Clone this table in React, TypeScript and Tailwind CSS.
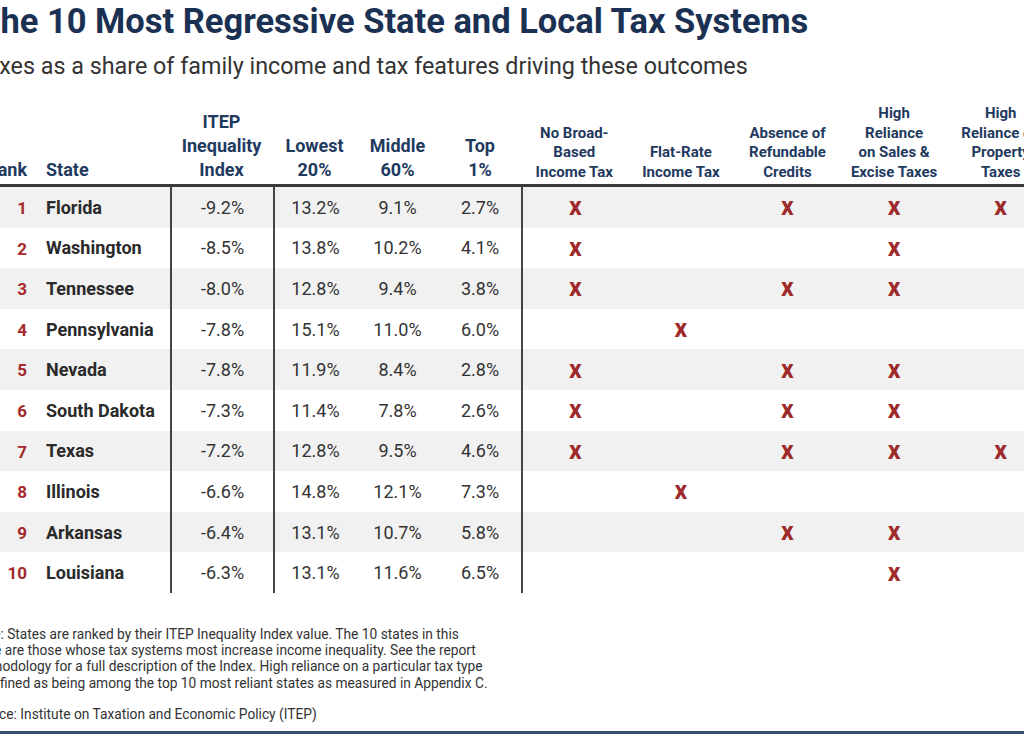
import React from "react";

type Row = [number, string, string, string, string, string, number[]];

const rows: Row[] = [
  [1, "Florida", "-9.2%", "13.2%", "9.1%", "2.7%", [1, 0, 1, 1, 1]],
  [2, "Washington", "-8.5%", "13.8%", "10.2%", "4.1%", [1, 0, 0, 1, 0]],
  [3, "Tennessee", "-8.0%", "12.8%", "9.4%", "3.8%", [1, 0, 1, 1, 0]],
  [4, "Pennsylvania", "-7.8%", "15.1%", "11.0%", "6.0%", [0, 1, 0, 0, 0]],
  [5, "Nevada", "-7.8%", "11.9%", "8.4%", "2.8%", [1, 0, 1, 1, 0]],
  [6, "South Dakota", "-7.3%", "11.4%", "7.8%", "2.6%", [1, 0, 1, 1, 0]],
  [7, "Texas", "-7.2%", "12.8%", "9.5%", "4.6%", [1, 0, 1, 1, 1]],
  [8, "Illinois", "-6.6%", "14.8%", "12.1%", "7.3%", [0, 1, 0, 0, 0]],
  [9, "Arkansas", "-6.4%", "13.1%", "10.7%", "5.8%", [0, 0, 1, 1, 0]],
  [10, "Louisiana", "-6.3%", "13.1%", "11.6%", "6.5%", [0, 0, 0, 1, 0]],
];

const grid =
  "grid grid-cols-[56px_134px_103px_83px_83px_82px_repeat(5,106.6px)]";

function FeatHead({ lines }: { lines: string[] }) {
  return (
    <div className="self-end text-center text-[15px] leading-[19.5px] font-bold text-[#1f3a5f] pb-[2px]">
      {lines.map((l, i) => (
        <div key={i} className="whitespace-nowrap">
          {l}
        </div>
      ))}
    </div>
  );
}

function NumHead({ lines }: { lines: string[] }) {
  return (
    <div className="self-end text-center text-[18px] leading-[24px] font-bold text-[#1f3a5f] pb-[2px]">
      {lines.map((l, i) => (
        <div key={i} className="whitespace-nowrap">
          {l}
        </div>
      ))}
    </div>
  );
}

export default function App() {
  return (
    <div className="w-[1024px] h-[742px] overflow-hidden bg-white font-['Roboto',sans-serif]">
      <div className="ml-[-20px] w-[1074px]">
        <h1 className="ml-[-1px] mt-[1px] text-[34.5px] leading-[40px] font-bold text-[#1b3153] whitespace-nowrap">
          The 10 Most Regressive State and Local Tax Systems
        </h1>
        <div className="ml-[-6px] mt-[11px] text-[23.3px] leading-[28px] text-[#333333] whitespace-nowrap">
          Taxes as a share of family income and tax features driving these outcomes
        </div>

        <div className={`${grid} h-[104px]`}>
          <div className="self-end text-right pr-[9px] text-[18px] leading-[24px] font-bold text-[#1f3a5f] pb-[2px]">
            Rank
          </div>
          <div className="self-end pl-[10px] text-[18px] leading-[24px] font-bold text-[#1f3a5f] pb-[2px]">
            State
          </div>
          <NumHead lines={["ITEP", "Inequality", "Index"]} />
          <NumHead lines={["Lowest", "20%"]} />
          <NumHead lines={["Middle", "60%"]} />
          <NumHead lines={["Top", "1%"]} />
          <FeatHead lines={["No Broad-", "Based", "Income Tax"]} />
          <FeatHead lines={["Flat-Rate", "Income Tax"]} />
          <FeatHead lines={["Absence of", "Refundable", "Credits"]} />
          <FeatHead lines={["High", "Reliance", "on Sales &", "Excise Taxes"]} />
          <FeatHead lines={["High", "Reliance on", "Property", "Taxes"]} />
        </div>
        <div className="h-[3px] bg-[#3a3a3a]" />

        {rows.map((r, idx) => (
          <div
            key={r[0]}
            className={`${grid} h-[40.6px] ${idx % 2 === 0 ? "bg-[#f1f1f1]" : "bg-white"}`}
          >
            <div className="flex items-center justify-end pr-[9px] pt-[3px] text-[17px] font-bold text-[#a5292c]">
              {r[0]}
            </div>
            <div className="flex items-center pl-[10px] text-[18px] font-bold text-[#2a2a2a] whitespace-nowrap">
              {r[1]}
            </div>
            <div className="flex items-center justify-center border-l-2 border-[#444444] text-[18px] text-[#333333]">
              {r[2]}
            </div>
            <div className="flex items-center justify-center border-l-2 border-[#444444] text-[18px] text-[#333333]">
              {r[3]}
            </div>
            <div className="flex items-center justify-center text-[18px] text-[#333333]">
              {r[4]}
            </div>
            <div className="flex items-center justify-center text-[18px] text-[#333333]">
              {r[5]}
            </div>
            {r[6].map((v, j) => (
              <div
                key={j}
                className={`flex items-center justify-center text-[25px] leading-[40px] font-bold text-[#9e2a2b] ${
                  j === 0 ? "border-l-2 border-[#444444]" : ""
                }`}
              >
                {v ? "x" : ""}
              </div>
            ))}
          </div>
        ))}

        <div className="ml-[-9px] mt-[33px] w-[518px] text-[13.75px] leading-[16.2px] text-[#333333]">
          Note: States are ranked by their ITEP Inequality Index value. The 10 states in this
          table are those whose tax systems most increase income inequality. See the report
          methodology for a full description of the Index. High reliance on a particular tax type
          is defined as being among the top 10 most reliant states as measured in Appendix C.
        </div>
        <div className="ml-[-9px] mt-[15px] text-[13.75px] leading-[16.2px] text-[#333333] whitespace-nowrap">
          Source: Institute on Taxation and Economic Policy (ITEP)
        </div>
        <div className="mt-[9px] h-[3px] bg-[#34506e]" />
      </div>
    </div>
  );
}
